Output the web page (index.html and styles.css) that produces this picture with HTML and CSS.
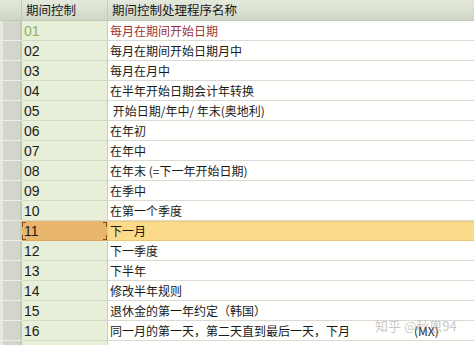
FILE: index.html
```html
<!DOCTYPE html>
<html>
<head>
<meta charset="utf-8">
<link rel="stylesheet" href="styles.css">
</head>
<body>
<div class="grid">
  <div class="sel hdr"></div><div class="hcell c2">期间控制</div><div class="hcell c3">期间控制处理程序名称</div>

  <div class="sel"></div><div class="code first">01</div><div class="name first">每月在期间开始日期</div>
  <div class="sel"></div><div class="code">02</div><div class="name">每月在期间开始日期月中</div>
  <div class="sel"></div><div class="code">03</div><div class="name">每月在月中</div>
  <div class="sel"></div><div class="code">04</div><div class="name">在半年开始日期会计年转换</div>
  <div class="sel"></div><div class="code">05</div><div class="name">&nbsp;开始日期/年中/ 年末(奥地利)</div>
  <div class="sel"></div><div class="code">06</div><div class="name">在年初</div>
  <div class="sel"></div><div class="code">07</div><div class="name">在年中</div>
  <div class="sel"></div><div class="code">08</div><div class="name">在年末 (=下一年开始日期)</div>
  <div class="sel"></div><div class="code">09</div><div class="name">在季中</div>
  <div class="sel"></div><div class="code">10</div><div class="name">在第一个季度</div>
  <div class="sel"></div><div class="code active"><span class="bk tl"></span><span class="bk bl"></span><span class="bk tr"></span><span class="bk br"></span>11</div><div class="name active">下一月</div>
  <div class="sel"></div><div class="code">12</div><div class="name">下一季度</div>
  <div class="sel"></div><div class="code">13</div><div class="name">下半年</div>
  <div class="sel"></div><div class="code">14</div><div class="name">修改半年规则</div>
  <div class="sel"></div><div class="code">15</div><div class="name">退休金的第一年约定（韩国）</div>
  <div class="sel"></div><div class="code">16</div><div class="name">同一月的第一天，第二天直到最后一天，下月<span class="mx">(MX)</span></div>
  <div class="sel"></div><div class="code"></div><div class="name"></div>
</div>
<div class="wm">知乎 @秋恩94</div>
</body>
</html>
```

FILE: styles.css
```css
html, body {
  margin: 0;
  padding: 0;
  background: #ffffff;
  overflow: hidden;
}
body {
  width: 474px;
  height: 345px;
  position: relative;
  font-family: "Noto Sans CJK SC", "Liberation Sans", sans-serif;
}
.grid {
  display: grid;
  grid-template-columns: 22px 86px 366px;
  grid-template-rows: 21px repeat(17, 20px);
}
.sel {
  background: linear-gradient(to right, #e6e8e1 0, #e6e8e1 3px, #d3d7cb 3px, #d3d7cb 20px, #c4c8bb 20px);
  border-bottom: 1px solid #eceee8;
  box-sizing: border-box;
}
.sel.hdr {
  background: linear-gradient(#e3e8dc, #cfd6c5);
  border-right: 1px solid #c2c8b8;
  border-bottom: 1px solid #c2c8b8;
}
.hcell {
  background: linear-gradient(#e4e9dd, #d0d7c6);
  border-bottom: 1px solid #c2c8b8;
  box-sizing: border-box;
  font-size: 12.5px;
  line-height: 20px;
  color: #1a1a1a;
  padding-left: 4px;
  white-space: nowrap;
}
.hcell.c2 {
  border-right: 1px solid #c6ccbc;
}
.code {
  position: relative;
  background: #e7efd9;
  border-bottom: 1px solid #d2dac6;
  border-right: 1px solid #c9cfbf;
  box-sizing: border-box;
  font-family: "Liberation Sans", sans-serif;
  font-size: 14px;
  line-height: 20px;
  color: #1c1c1c;
  padding-left: 2px;
}
.code.first {
  color: #8fb05a;
}
.name {
  background: #fffffd;
  border-bottom: 1px solid #d9d9d6;
  box-sizing: border-box;
  font-size: 12px;
  line-height: 20px;
  color: #1a1a1a;
  padding-left: 2px;
  white-space: nowrap;
}
.name.first {
  color: #9c3434;
}
.code.active {
  background: #e8b56c;
  border-bottom-color: #d9a45e;
}
.name.active {
  background: #fbdb89;
  border-bottom-color: #e8c873;
  box-shadow: inset 0 1px 0 #f0cf7c;
}
.bk {
  position: absolute;
  width: 3px;
  height: 4px;
  border-color: #8a4a20;
  border-style: solid;
  border-width: 0;
}
.bk.tl { left: 0; top: 1px; border-left-width: 1px; border-top-width: 1px; }
.bk.bl { left: 0; bottom: 0; border-left-width: 1px; border-bottom-width: 1px; }
.bk.tr { right: 0; top: 1px; border-right-width: 1px; border-top-width: 1px; }
.bk.br { right: 0; bottom: 0; border-right-width: 1px; border-bottom-width: 1px; }
.mx {
  margin-left: 64px;
}
.wm {
  position: absolute;
  left: 375px;
  top: 318px;
  font-size: 13px;
  line-height: 16px;
  color: rgba(150, 150, 150, 0.55);
  white-space: nowrap;
}
```
